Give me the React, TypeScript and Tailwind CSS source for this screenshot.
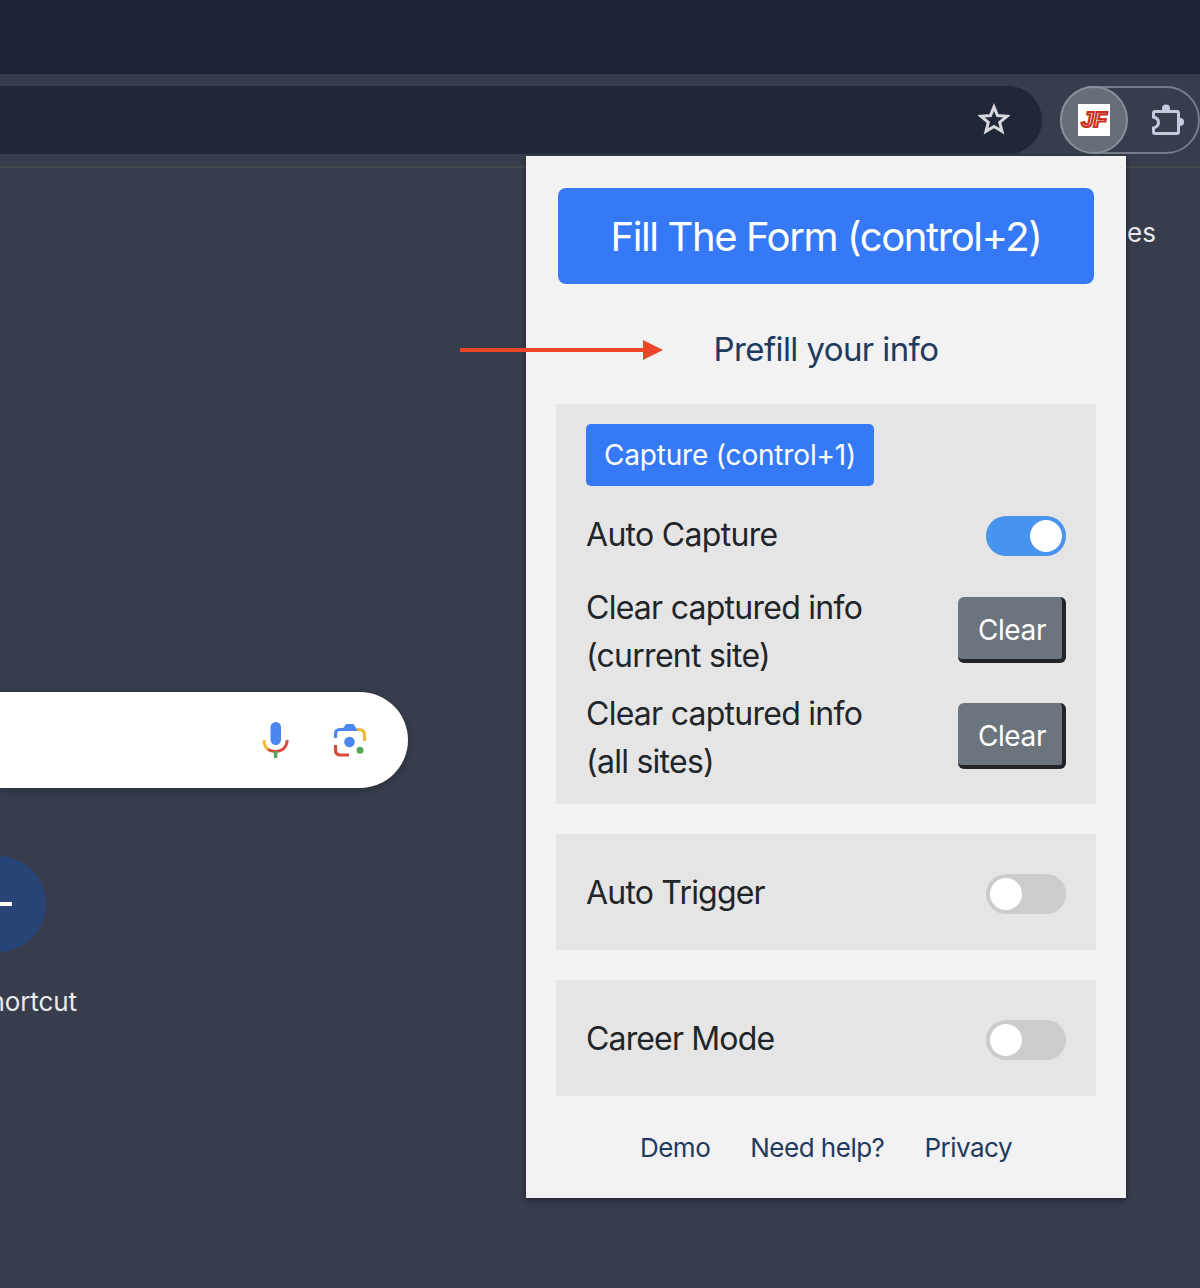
import React from "react";

function Toggle({ on, className = "" }: { on?: boolean; className?: string }) {
  return (
    <div className={(on ? "justify-end bg-[#4793ee] " : "justify-start bg-[#cccccc] ") + "flex h-10 w-20 shrink-0 items-center rounded-full p-1 " + className}>
      <div className="h-8 w-8 rounded-full bg-white" />
    </div>
  );
}

function ClearRow({ a, b, className }: { a: string; b: string; className: string }) {
  return (
    <div className={"flex h-24 items-start justify-between " + className}>
      <div className="pt-[1px] text-[32px] leading-[48px] tracking-[-0.74px] text-[#212529]">
        <div>{a}</div>
        <div>{b}</div>
      </div>
      <button className="mt-3.5 h-[66px] w-[108px] rounded-md border-r-4 border-b-4 border-[#212529] bg-[#6c757d] pt-1 pl-1 text-[28px] tracking-[-0.4px] text-white">Clear</button>
    </div>
  );
}

function Mic() {
  return (
    <svg width="28" height="38" viewBox="0 0 28 38" className="shrink-0">
      <rect x="8.5" y="1" width="10.5" height="23" rx="5.2" fill="#4c86f0" />
      <path d="M2 19 C2.2 25 5 28 7 29" fill="none" stroke="#f0b93a" strokeWidth="3" />
      <path d="M6 28.5 C10 31 17 31 20.5 28.5 C23.5 26.5 25 23 25.2 19" fill="none" stroke="#d9493c" strokeWidth="3" />
      <rect x="11.8" y="30" width="3.6" height="7" fill="#54a75a" />
    </svg>
  );
}

function Lens() {
  return (
    <svg width="34" height="34" viewBox="0 0 34 34" className="shrink-0">
      <path d="M2.5 15 V11 C2.5 8 4.5 6.5 7 6.5 H10" fill="none" stroke="#4c86f0" strokeWidth="3.2" />
      <path d="M8 8 L12 2.5 C12.5 1.5 13 1 14.5 1 H19 C20.5 1 21 1.5 21.5 2.5 L25 8 Z" fill="#4c86f0" />
      <path d="M24 6.5 H26 C29.5 6.5 31.5 8.5 31.5 12 V18" fill="none" stroke="#f0b93a" strokeWidth="3.2" />
      <path d="M2.5 22 V27 C2.5 30.5 4.5 32 7.5 32 H16" fill="none" stroke="#d9493c" strokeWidth="3.2" />
      <circle cx="16.5" cy="19" r="5.3" fill="#4c86f0" />
      <circle cx="27" cy="27.3" r="3.5" fill="#54a75a" />
    </svg>
  );
}

function Puzzle() {
  return (
    <svg width="36" height="36" viewBox="0 0 36 36" fill="none" className="shrink-0">
      <circle cx="16" cy="6.5" r="4" fill="#c6cadf" />
      <circle cx="30" cy="20" r="4" fill="#c6cadf" />
      <path
        d="M5 9.5 H27 A1.5 1.5 0 0 1 28.5 11 V30 A1.5 1.5 0 0 1 27 31.5 H5 A1.5 1.5 0 0 1 3.5 30 V26 C7 25 8.5 23 8.5 20.5 C8.5 18 7 16 3.5 15 V11 A1.5 1.5 0 0 1 5 9.5 Z"
        stroke="#c6cadf"
        strokeWidth="3"
        fill="#373d4c"
      />
    </svg>
  );
}

function Star() {
  return (
    <svg width="32" height="32" viewBox="0 0 32 32" fill="none" stroke="#d6d8dd" strokeWidth="3" strokeLinejoin="miter" className="mb-[2px] shrink-0">
      <path d="M16 4 L19.5 12.6 L29 13.3 L21.7 19.3 L24 28.4 L16 23.5 L8 28.4 L10.3 19.3 L3 13.3 L12.5 12.6 Z" />
    </svg>
  );
}

export default function App() {
  return (
    <div className="relative h-[1288px] w-[1200px] overflow-hidden bg-[#373d4c] font-['Inter',sans-serif]">
      <div className="h-[74px] bg-[#1b2235]" />
      <div className="flex h-[94px] items-start border-b-2 border-[#444b50] pt-3">
        <div className="flex h-[68px] w-[1042px] items-center justify-end rounded-r-full bg-[#202838] pr-8">
          <Star />
        </div>
        <div className="ml-[18px] flex h-[68px] w-[140px] items-center rounded-full border-2 border-[#787c86]">
          <div className="-ml-0.5 flex h-[68px] w-[68px] items-center justify-center rounded-full border-2 border-[#8b8f99] bg-[#686d7a]">
            <div className="flex h-8 w-8 items-center justify-center overflow-hidden bg-white">
              <span className="font-['Liberation_Sans',sans-serif] text-[22px] leading-none font-bold tracking-[0px] text-white italic [-webkit-text-stroke:2.2px_#c8321e]">JF</span>
            </div>
          </div>
          <div className="ml-[22px]">
            <Puzzle />
          </div>
        </div>
      </div>

      <div className="flex justify-end pt-[49px] pr-[44px] text-[26px] leading-8 text-[#e8eaed]">Images</div>

      <div className="mt-[443px] flex h-24 w-[408px] items-center justify-end gap-[43px] rounded-r-full bg-white pr-[41px] shadow-[0_2px_8px_rgba(0,0,0,0.25)]">
        <Mic />
        <Lens />
      </div>

      <div className="-ml-[102px] mt-[68px] flex w-[200px] flex-col items-center">
        <div className="flex h-24 w-24 items-center justify-center rounded-full bg-[#284477]">
          <div className="relative h-7 w-7">
            <div className="absolute top-3 left-0 h-1 w-7 bg-white" />
          </div>
        </div>
        <div className="mt-8 w-[178px] text-center text-[26px] leading-9 tracking-[-0.1px] whitespace-nowrap text-[#e8eaed]">Add shortcut</div>
      </div>

      {/* Extension popup, floating over the page */}
      <div className="absolute top-[156px] left-[526px] flex h-[1042px] w-[600px] flex-col bg-[#f2f2f2] px-[30px] pt-8 shadow-[0_2px_6px_rgba(0,0,0,0.45)]">
        <button className="mx-0.5 h-24 w-[536px] shrink-0 rounded-lg bg-[#3679f6] pt-0.5 text-[40px] tracking-[-1.4px] text-white">Fill The Form (control+2)</button>
        <div className="mt-[41px] text-center text-[33px] leading-[48px] tracking-[-0.6px] text-[#1f3a5f]">Prefill your info</div>
        <div className="mt-[31px] h-[400px] bg-[#e5e5e5] px-[30px] pt-5">
          <button className="h-[62px] w-[288px] rounded-[5px] bg-[#3679f6] text-[28px] tracking-[-0.17px] text-white">Capture (control+1)</button>
          <div className="mt-[26px] flex h-12 items-center justify-between text-[32px] tracking-[-0.7px] text-[#212529]">
            <span className="-mt-[2px]">Auto Capture</span>
            <Toggle on />
          </div>
          <ClearRow a="Clear captured info" b="(current site)" className="mt-[23px]" />
          <ClearRow a="Clear captured info" b="(all sites)" className="mt-2.5" />
        </div>
        <div className="mt-[30px] flex h-[116px] items-center justify-between bg-[#e5e5e5] px-[30px] pt-[2px] text-[32px] tracking-[-0.8px] text-[#212529]">
          <span>Auto Trigger</span>
          <Toggle className="mt-[2px]" />
        </div>
        <div className="mt-[30px] flex h-[116px] items-center justify-between bg-[#e5e5e5] px-[30px] pt-[2px] text-[32px] tracking-[-0.85px] text-[#212529]">
          <span>Career Mode</span>
          <Toggle className="mt-[2px]" />
        </div>
        <div className="mt-[34px] flex justify-center gap-10 text-[26px] leading-9 tracking-[-0.5px] text-[#1f3a5f]">
          <span>Demo</span>
          <span>Need help?</span>
          <span>Privacy</span>
        </div>
      </div>

      {/* Annotation arrow drawn over the screenshot */}
      <svg className="absolute top-[340px] left-[460px]" width="204" height="20" viewBox="0 0 204 20">
        <rect x="0" y="8" width="186" height="4" fill="#ee4528" />
        <path d="M183 0 L203 10 L183 20 Z" fill="#ee4528" />
      </svg>
    </div>
  );
}
